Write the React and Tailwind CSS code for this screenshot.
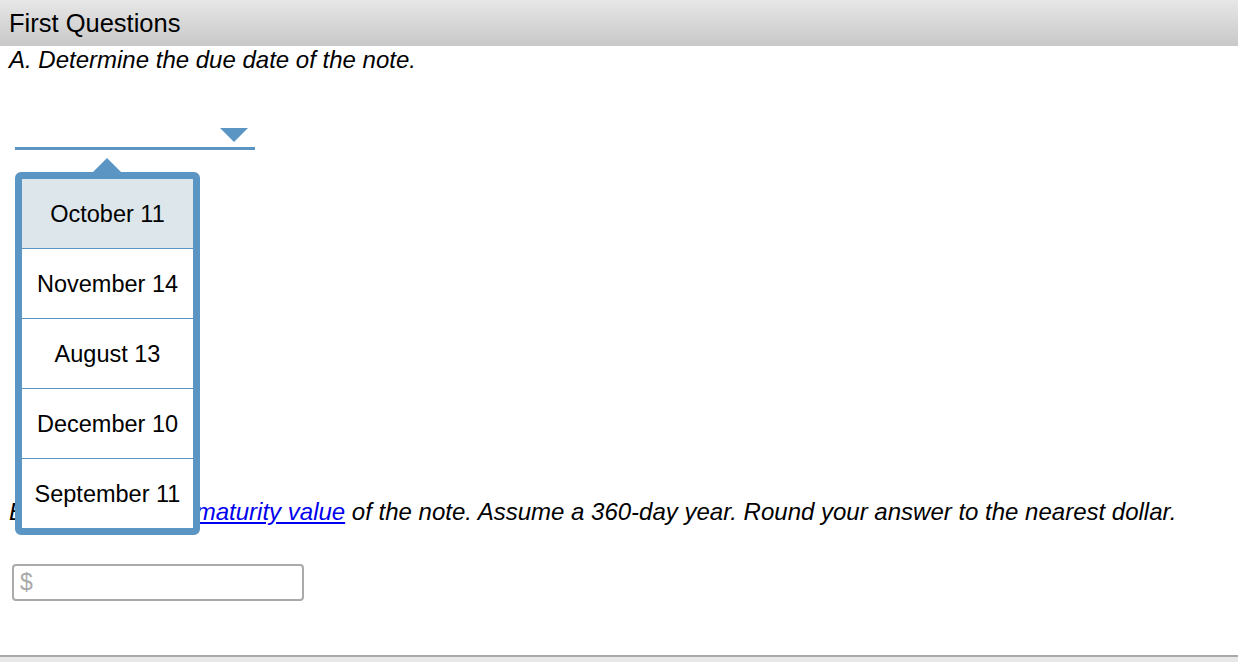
const options = ["October 11", "November 14", "August 13", "December 10", "September 11"];

function DateSelect() {
  return (
    <div className="relative ml-[15px] mt-[55px] w-[240px]">
      <div className="flex h-[22px] items-start justify-end border-b-[3px] border-[#5b95c4] pr-[7px]">
        <svg width="28" height="14" viewBox="0 0 28 14" className="block">
          <polygon points="0,0 28,0 14,14" fill="#5b95c4" />
        </svg>
      </div>
      <div className="absolute left-0 top-[30px] z-10 w-[185px]">
        <svg width="28" height="14" viewBox="0 0 28 14" className="ml-[78px] block">
          <polygon points="0,14 14,0 28,14" fill="#5b95c4" />
        </svg>
        <ul className="overflow-hidden rounded-[6px] border-[7px] border-[#5b95c4] bg-white">
          {options.map((o, i) => (
            <li
              key={o}
              className={
                i === 0
                  ? "flex h-[69px] items-center justify-center pt-[2px] bg-[#dde6ea] text-[23.5px] text-black"
                  : "flex h-[70px] items-center justify-center pt-[2px] border-t border-t-[#5b95c4] text-[23.5px] text-black"
              }
            >
              {o}
            </li>
          ))}
        </ul>
      </div>
    </div>
  );
}

export default function App() {
  return (
    <div className="flex h-[662px] flex-col bg-white font-['Liberation_Sans',Arial,sans-serif] text-black">
      <div className="flex h-[46px] items-center bg-gradient-to-b from-[#e7e7e7] to-[#c8c8c8] px-[9px] text-[25.5px]">
        First Questions
      </div>
      <p className="ml-[9px] mt-[1px] text-[24px] italic leading-[26px]">A. Determine the due date of the note.</p>
      <DateSelect />
      <p className="ml-[9px] mt-[349px] text-[24px] italic leading-[26px]">
        B. Determine the{" "}
        <a href="#" className="text-[#0000ee] underline">
          maturity value
        </a>{" "}
        of the note. Assume a 360-day year. Round your answer to the nearest dollar.
      </p>
      <div className="ml-[12px] mt-[39px] flex h-[37px] w-[292px] items-center rounded-[4px] border-2 border-[#aaaaaa] px-[6px] text-[23px] text-[#aaaaaa]">
        $
      </div>
      <div className="mt-auto h-[7px] border-t-2 border-[#aaaaaa] bg-[#e8e8e8]" />
    </div>
  );
}
